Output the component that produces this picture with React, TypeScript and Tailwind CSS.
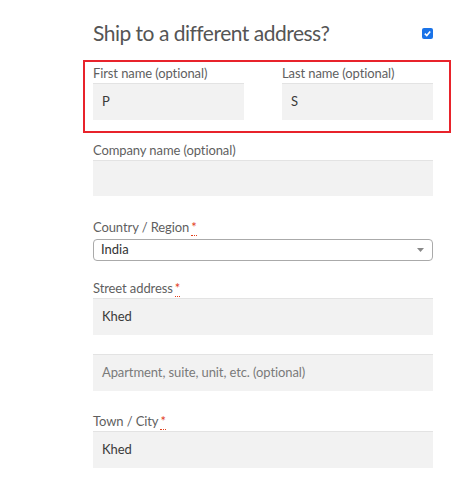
import React from 'react'

const FONT = { fontFamily: 'Lato, "Open Sans", sans-serif' }

function Req() {
  return (
    <abbr className="ml-[2px] text-[#e2401c] no-underline border-b border-dotted border-[#e2401c]" title="required">
      *
    </abbr>
  )
}

function Label({ children }: { children: React.ReactNode }) {
  return <div className="h-[20px] text-[13px] tracking-[-0.1px] leading-[20px] text-[#5f5f5f]">{children}</div>
}

function Field({ value, placeholder }: { value?: string; placeholder?: string }) {
  return (
    <div className="h-[37px] bg-[#f2f2f2] border-t border-[#e3e3e3] px-[9px] flex items-center text-[13px] tracking-[-0.1px]">
      {value ? (
        <span className="text-[#3a3a3a]">{value}</span>
      ) : (
        <span className="text-[#7a7a7a]">{placeholder}</span>
      )}
    </div>
  )
}

export default function App() {
  return (
    <div className="min-h-screen bg-white" style={FONT}>
      <div className="ml-[93px] w-[340px] pt-[17px]">
        {/* Heading */}
        <div className="flex items-center justify-between h-[32px]">
          <h3 className="text-[21px] tracking-[-0.5px] leading-[32px] text-[#555]">Ship to a different address?</h3>
          <div className="w-[11px] h-[11px] rounded-[2px] bg-[#1a73e8] flex items-center justify-center">
            <svg width="9" height="9" viewBox="0 0 10 10">
              <path d="M2 5.2 L4.2 7.3 L8 2.8" stroke="white" strokeWidth="1.8" fill="none" />
            </svg>
          </div>
        </div>

        {/* Name row */}
        <div className="mt-[11px] ml-[-10px] mr-[-18px] border-2 border-[#e8232b] pl-[8px] pr-[16px] pt-[1px] pb-[11px]">
          <div className="grid grid-cols-2 gap-[38px]">
            <div>
              <Label>First name (optional)</Label>
              <Field value="P" />
            </div>
            <div>
              <Label>Last name (optional)</Label>
              <Field value="S" />
            </div>
          </div>
        </div>

        <div className="mt-[7px]">
          <Label>Company name (optional)</Label>
          <div className="h-[36px] bg-[#f2f2f2] border-t border-[#e3e3e3]" />
        </div>

        <div className="mt-[21px]">
          <Label>
            Country / Region<Req />
          </Label>
          <div className="mt-[2px] h-[22px] border border-[#aaa] rounded-[4px] flex items-center justify-between pl-[7px] pr-[8px] text-[13px] text-[#333]">
            <span>India</span>
            <svg width="7" height="4" viewBox="0 0 7 4">
              <path d="M0 0 L7 0 L3.5 4 Z" fill="#888" />
            </svg>
          </div>
        </div>

        <div className="mt-[17px]">
          <Label>
            Street address<Req />
          </Label>
          <Field value="Khed" />
          <div className="mt-[19px]">
            <Field placeholder="Apartment, suite, unit, etc. (optional)" />
          </div>
        </div>

        <div className="mt-[20px]">
          <Label>
            Town / City<Req />
          </Label>
          <Field value="Khed" />
        </div>
      </div>
    </div>
  )
}
